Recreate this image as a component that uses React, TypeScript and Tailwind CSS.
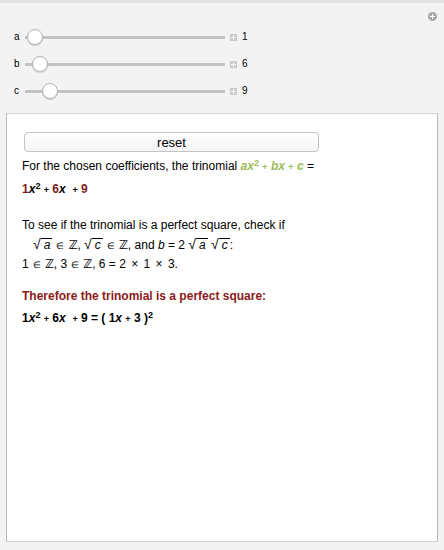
import React from "react";

const RED = "text-[#7f1d1d]";

function Thumb({ left }: { left: string }) {
  return (
    <div
      className={`absolute top-1/2 -translate-y-1/2 ${left} w-[16px] h-[16px] rounded-full bg-white border border-[#b4b4b4] shadow-[0_1px_1px_rgba(0,0,0,0.15)]`}
    />
  );
}

function PlusBox() {
  return (
    <div className="relative ml-[5px] w-[7px] h-[7px] bg-[#c9c9c9]">
      <div className="absolute left-[1px] top-[3px] w-[5px] h-[1px] bg-white" />
      <div className="absolute left-[3px] top-[1px] w-[1px] h-[5px] bg-white" />
    </div>
  );
}

function SliderRow({ label, left, value }: { label: string; left: string; value: string }) {
  return (
    <div className="flex items-center h-[18px]">
      <div className="w-[25px] pl-[14px] text-[10px] leading-none">{label}</div>
      <div className="relative w-[200px] h-[3px] bg-[#c2c2c2]">
        <Thumb left={left} />
      </div>
      <PlusBox />
      <div className="ml-[5px] text-[10px] leading-none">{value}</div>
    </div>
  );
}

function Sqrt({ v }: { v: string }) {
  return (
    <span className="inline-flex items-baseline">
      <span className="text-[14px] leading-[14px]">√</span>
      <span className="border-t border-black leading-[12px] italic pl-[3px] pr-[2px]">{v}</span>
    </span>
  );
}

function Z() {
  return <span className="font-['DejaVu_Sans',sans-serif] font-bold text-[12px] leading-none">ℤ</span>;
}

function In() {
  return <span className="text-[9px] mx-[4px] leading-none">∈</span>;
}

export default function App() {
  return (
    <div className="relative w-[444px] h-[550px] bg-[#f3f3f3] font-['Liberation_Sans',Arial,sans-serif] text-black overflow-hidden">
      <div className="h-[3px] bg-[#e4e4e4]" />
      <div className="absolute left-[428px] top-[12px] w-[9px] h-[9px] rounded-full bg-[#a8a8a8]">
        <div className="absolute left-[2px] top-[4px] w-[5px] h-[1px] bg-white" />
        <div className="absolute left-[4px] top-[2px] w-[1px] h-[5px] bg-white" />
      </div>

      <div className="flex flex-col gap-[9px] pt-[25px]">
        <SliderRow label="a" left="left-[2px]" value="1" />
        <SliderRow label="b" left="left-[7px]" value="6" />
        <SliderRow label="c" left="left-[17px]" value="9" />
      </div>

      <div className="mx-[6px] mt-[13px] h-[429px] bg-white border border-[#d2d2d2] border-l-[#b8b8b8] border-r-[#b8b8b8] pl-[15px] pt-[18px]">
        <button className="block ml-[2px] w-[295px] h-[20px] rounded-[4px] border border-[#c4c4c4] bg-gradient-to-b from-white to-[#f4f4f4] text-[13px] leading-none text-black">
          reset
        </button>

        <div className="mt-[3px] text-[12px]">
          <div className="leading-[22px]">
            For the chosen coefficients, the trinomial{" "}
            <span className="text-[#9bbb59] font-bold">
              <span className="italic">ax</span>
              <sup>2</sup> <span className="text-[9px]">+</span> <span className="italic">bx</span>{" "}
              <span className="text-[9px]">+</span> <span className="italic">c</span>
            </span>{" "}
            =
          </div>
          <div className="leading-[22px] font-bold">
            <span className={RED}>1</span>
            <span className="italic">x</span>
            <sup>2</sup> <span className="text-[9px]">+</span> <span className={RED}>6</span>
            <span className="italic">x</span>
            {"\u00a0\u00a0"}
            <span className="text-[9px]">+</span> <span className={RED}>9</span>
          </div>

          <div className="mt-[15px] leading-[18px]">
            To see if the trinomial is a perfect square, check if
          </div>
          <div className="h-[20px] pl-[11px] pt-[3px] leading-[16px]">
            <Sqrt v="a" />
            <In />
            <Z />,&nbsp;
            <Sqrt v="c" />
            <In />
            <Z />, and <span className="italic">b</span> = 2&nbsp;
            <Sqrt v="a" />
            &nbsp;
            <Sqrt v="c" />:
          </div>
          <div className="leading-[20px]">
            1<In />
            <Z />, 3<In />
            <Z />, 6 = 2 <span className="mx-[2px]">×</span> 1 <span className="mx-[2px]">×</span> 3.
          </div>

          <div className="mt-[12px] leading-[20px] font-bold text-[#8b1a1a]">
            Therefore the trinomial is a perfect square:
          </div>
          <div className="leading-[24px] font-bold">
            1<span className="italic">x</span>
            <sup>2</sup> <span className="text-[9px]">+</span> 6<span className="italic">x</span>
            {"\u00a0\u00a0"}
            <span className="text-[9px]">+</span> 9 = ( 1<span className="italic">x</span>{" "}
            <span className="text-[9px]">+</span> 3 )<sup>2</sup>
          </div>
        </div>
      </div>
    </div>
  );
}
